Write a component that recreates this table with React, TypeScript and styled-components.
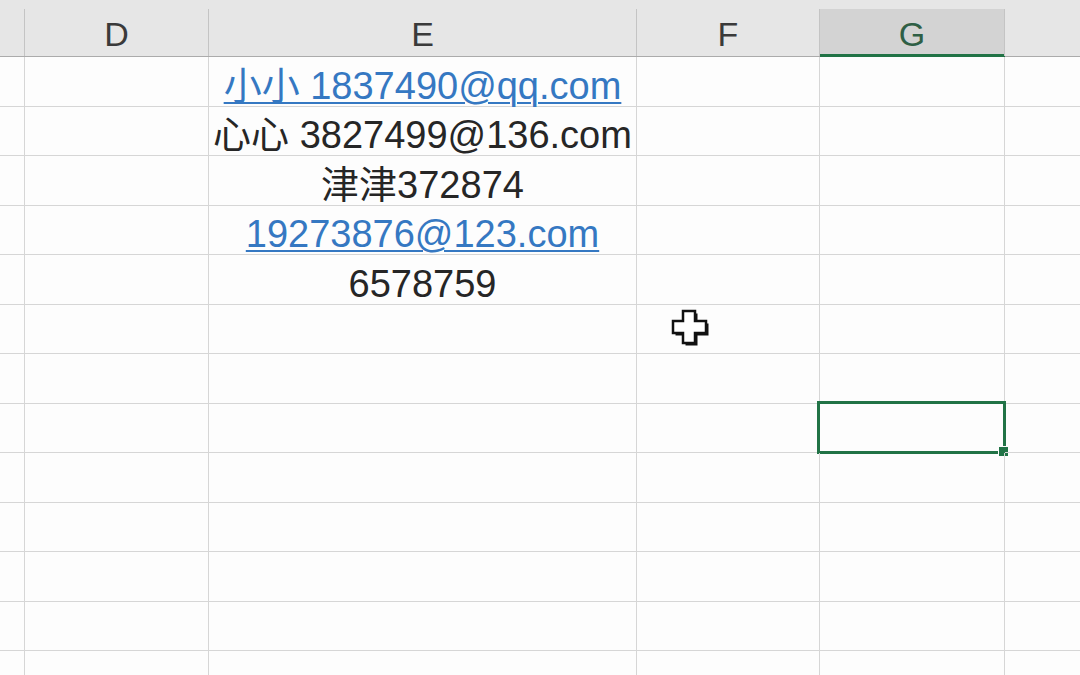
import React from "react";
import styled, { createGlobalStyle } from "styled-components";

const GlobalStyle = createGlobalStyle`
  html, body { margin: 0; padding: 0; background: #fdfdfd; overflow: hidden; }
  body { font-family: "Liberation Sans", "Noto Sans CJK SC", sans-serif; }
`;

const GREEN = "#217346";

const Sheet = styled.div`
  display: grid;
  grid-template-columns: 25px 184px 428px 183px 185px 1fr;
  grid-template-rows: 57px;
  grid-auto-rows: 49.5px;
  width: 1080px;
  height: 675px;
  overflow: hidden;
  background: #fdfdfd;
`;

const HeaderCell = styled.div<{ $selected?: boolean }>`
  box-sizing: border-box;
  padding-top: 9px;
  background: #e6e6e6;
  border-bottom: 1px solid ${(p) => (p.$selected ? GREEN : "#ababab")};
`;

const HeaderInner = styled.div<{ $selected?: boolean; $last?: boolean }>`
  box-sizing: border-box;
  height: 100%;
  display: flex;
  align-items: center;
  justify-content: center;
  padding-top: 3px;
  border-right: ${(p) => (p.$last ? "none" : "1px solid #c4c4c4")};
  background: ${(p) => (p.$selected ? "#d3d3d3" : "transparent")};
  box-shadow: ${(p) => (p.$selected ? `inset 0 -2px 0 ${GREEN}` : "none")};
  color: ${(p) => (p.$selected ? "#2f5f45" : "#3a3a3a")};
  font-size: 34px;
  line-height: 1;
`;

const Cell = styled.div<{ $last?: boolean }>`
  position: relative;
  box-sizing: border-box;
  border-right: ${(p) => (p.$last ? "none" : "1px solid #d6d6d6")};
  border-bottom: 1px solid #d6d6d6;
  display: flex;
  align-items: flex-end;
  justify-content: center;
  padding-bottom: 1px;
  white-space: nowrap;
  overflow: visible;
`;

const CellText = styled.span<{ $link?: boolean }>`
  font-family: "Liberation Sans", "Noto Sans CJK SC", sans-serif;
  font-size: 38px;
  line-height: 1;
  color: ${(p) => (p.$link ? "#3578c2" : "#262626")};
  text-decoration: ${(p) => (p.$link ? "underline" : "none")};
  text-decoration-thickness: 1.5px;
  text-underline-offset: 3px;
`;

const Selection = styled.div`
  position: absolute;
  left: -3px;
  top: -3px;
  right: -2px;
  bottom: -2px;
  border: 3px solid ${GREEN};
  box-sizing: border-box;
  pointer-events: none;
`;

const Handle = styled.div`
  position: absolute;
  right: -6px;
  bottom: -6px;
  width: 9px;
  height: 9px;
  background: ${GREEN};
  border: 1px solid #fdfdfd;
`;

const CursorWrap = styled.div`
  position: absolute;
  left: 33px;
  top: 3px;
  width: 40px;
  height: 38px;
`;

const PlusCursor = () => (
  <CursorWrap>
    <svg width="40" height="38" viewBox="0 0 40 38">
      <path
        d="M13 3 H25 V13 H36 V25 H25 V35 H13 V25 H3 V13 H13 Z"
        fill="#111"
        transform="translate(2.5 2.5)"
      />
      <path
        d="M13 3 H25 V13 H36 V25 H25 V35 H13 V25 H3 V13 H13 Z"
        fill="#fff"
        stroke="#111"
        strokeWidth="2.5"
        strokeLinejoin="miter"
      />
    </svg>
  </CursorWrap>
);

const headers = ["", "D", "E", "F", "G", ""];

const dataE: { text: string; link?: boolean }[] = [
  { text: "小小 1837490@qq.com", link: true },
  { text: "心心 3827499@136.com" },
  { text: "津津372874" },
  { text: "19273876@123.com", link: true },
  { text: "6578759" },
];

const ROWS = 13;

export default function App() {
  const rows = Array.from({ length: ROWS }, (_, r) => r);
  return (
    <>
      <GlobalStyle />
      <Sheet>
        {headers.map((h, i) => (
          <HeaderCell key={`h${i}`} $selected={i === 4}>
            <HeaderInner $selected={i === 4} $last={i === 5}>
              {h}
            </HeaderInner>
          </HeaderCell>
        ))}
        {rows.map((r) =>
          headers.map((_, c) => {
            const d = c === 2 ? dataE[r] : undefined;
            return (
              <Cell key={`c${r}-${c}`} $last={c === 5}>
                {d && <CellText $link={d.link}>{d.text}</CellText>}
                {r === 7 && c === 4 && (
                  <Selection>
                    <Handle />
                  </Selection>
                )}
                {r === 5 && c === 3 && <PlusCursor />}
              </Cell>
            );
          })
        )}
      </Sheet>
    </>
  );
}
